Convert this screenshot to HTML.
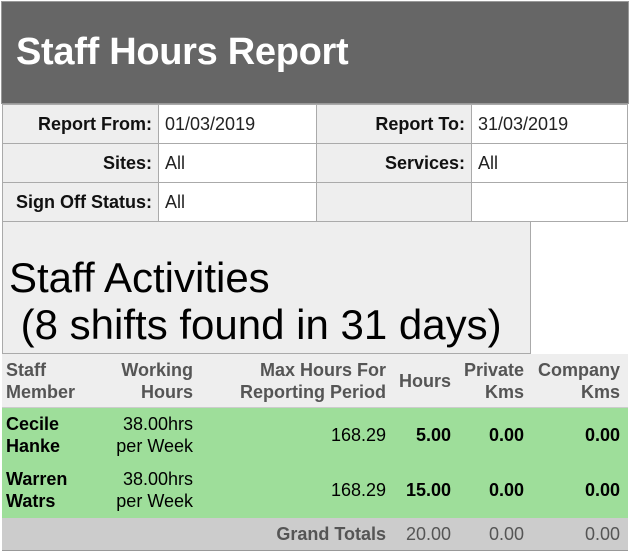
<!DOCTYPE html>
<html><head><style>
*{margin:0;padding:0;box-sizing:border-box}
body{width:631px;height:552px;background:#fff;font-family:"Liberation Sans",Arial,sans-serif;position:relative;overflow:hidden}
.a{position:absolute}
.hdr{left:1px;top:1px;width:628px;height:103px;background:#666;border:1px solid #999}
.hdr h1{position:absolute;left:14px;top:29px;font-size:38px;color:#fff;font-weight:bold;letter-spacing:-0.3px}
.c{position:absolute;border:1px solid #aaa;font-size:18px;line-height:38px;padding:0 6px;color:#222;white-space:nowrap}
.l{background:#eee;text-align:right;font-weight:bold;color:#111}
.v{background:#fff}
.sa{left:2px;top:221px;width:529px;height:133px;background:#eee;border:1px solid #aaa;font-size:42px;line-height:47px;padding:32px 0 0 6px;color:#000;white-space:nowrap}
.row{position:absolute;left:2px;width:626px}
.th{top:354px;height:54px;background:#eee;border-bottom:1px solid #ccc}
.g{background:#9ede9a;border-bottom:1px solid #7cbf78}
.t{top:518px;height:33px;background:#ccc;border-bottom:1px solid #999}
.cell{position:absolute;font-size:18px;line-height:22px;white-space:nowrap}
.hd{font-weight:bold;color:#555}
.r{text-align:right}
.b{font-weight:bold;color:#000}
</style></head><body>
<div class="a hdr"><h1>Staff Hours Report</h1></div>

<div class="c l" style="left:2px;top:104px;width:157px;height:40px">Report From:</div>
<div class="c v" style="left:158px;top:104px;width:159px;height:40px">01/03/2019</div>
<div class="c l" style="left:316px;top:104px;width:156px;height:40px">Report To:</div>
<div class="c v" style="left:471px;top:104px;width:157px;height:40px">31/03/2019</div>

<div class="c l" style="left:2px;top:143px;width:157px;height:40px">Sites:</div>
<div class="c v" style="left:158px;top:143px;width:159px;height:40px">All</div>
<div class="c l" style="left:316px;top:143px;width:156px;height:40px">Services:</div>
<div class="c v" style="left:471px;top:143px;width:157px;height:40px">All</div>

<div class="c l" style="left:2px;top:182px;width:157px;height:40px">Sign Off Status:</div>
<div class="c v" style="left:158px;top:182px;width:159px;height:40px">All</div>
<div class="c l" style="left:316px;top:182px;width:156px;height:40px"></div>
<div class="c v" style="left:471px;top:182px;width:157px;height:40px"></div>

<div class="a sa">Staff Activities<br>&nbsp;(8 shifts found in 31 days)</div>

<div class="row th">
<div class="cell hd" style="left:4px;top:5px">Staff<br>Member</div>
<div class="cell hd r" style="right:435px;top:5px">Working<br>Hours</div>
<div class="cell hd r" style="right:242px;top:5px">Max Hours For<br>Reporting Period</div>
<div class="cell hd r" style="right:177px;top:16px">Hours</div>
<div class="cell hd r" style="right:104px;top:5px">Private<br>Kms</div>
<div class="cell hd r" style="right:8px;top:5px">Company<br>Kms</div>
</div>

<div class="row g" style="top:408px;height:56px">
<div class="cell b" style="left:4px;top:5px">Cecile<br>Hanke</div>
<div class="cell r" style="right:435px;top:5px">38.00hrs<br>per Week</div>
<div class="cell r" style="right:242px;top:16px">168.29</div>
<div class="cell r b" style="right:177px;top:16px">5.00</div>
<div class="cell r b" style="right:104px;top:16px">0.00</div>
<div class="cell r b" style="right:8px;top:16px">0.00</div>
</div>
<div class="row g" style="top:463px;height:56px">
<div class="cell b" style="left:4px;top:5px">Warren<br>Watrs</div>
<div class="cell r" style="right:435px;top:5px">38.00hrs<br>per Week</div>
<div class="cell r" style="right:242px;top:16px">168.29</div>
<div class="cell r b" style="right:177px;top:16px">15.00</div>
<div class="cell r b" style="right:104px;top:16px">0.00</div>
<div class="cell r b" style="right:8px;top:16px">0.00</div>
</div>
<div class="row t">
<div class="cell hd r" style="right:242px;top:5px">Grand Totals</div>
<div class="cell r" style="right:177px;top:5px;color:#555">20.00</div>
<div class="cell r" style="right:104px;top:5px;color:#555">0.00</div>
<div class="cell r" style="right:8px;top:5px;color:#555">0.00</div>
</div>
</body></html>
